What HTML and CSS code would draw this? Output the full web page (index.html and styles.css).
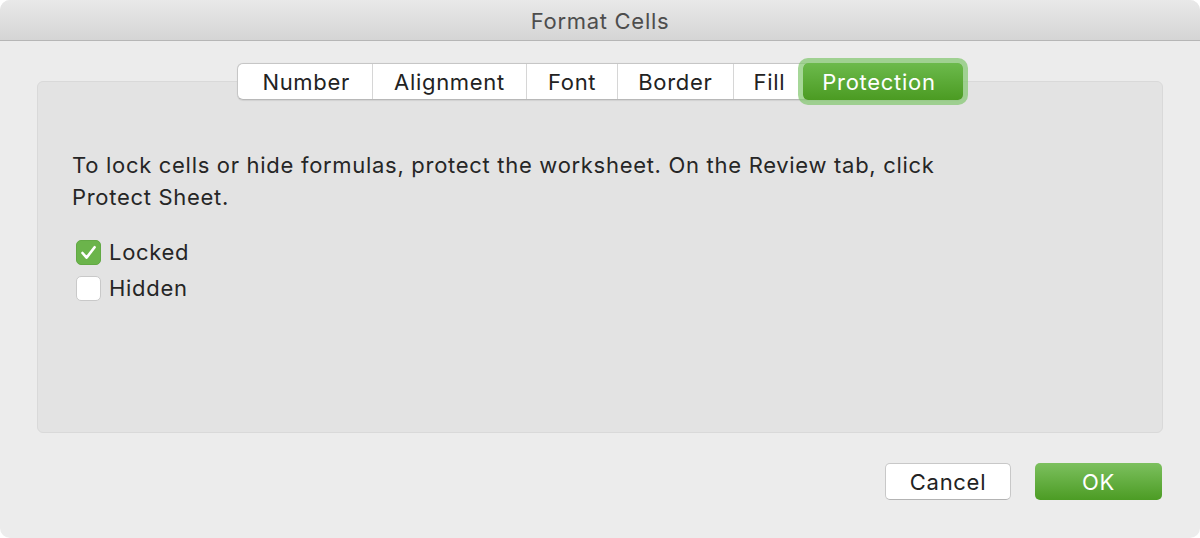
FILE: index.html
```html
<!DOCTYPE html>
<html lang="en">
<head>
<meta charset="utf-8">
<title>Format Cells</title>
<link rel="stylesheet" href="styles.css">
</head>
<body>
<div class="window">
  <div class="titlebar">Format Cells</div>
  <div class="content">
    <div class="tabs-wrap">
      <div class="tabs">
        <div class="tab">Number</div>
        <div class="tab">Alignment</div>
        <div class="tab">Font</div>
        <div class="tab">Border</div>
        <div class="tab">Fill</div>
        <div class="tab tab-active">Protection</div>
      </div>
    </div>
    <div class="group">
      <p class="info">To lock cells or hide formulas, protect the worksheet. On the Review tab, click Protect Sheet.</p>
      <div class="checks">
        <label class="check">
          <span class="box box-on">
            <svg viewBox="0 0 25 25" width="25" height="25"><path d="M6.5 13 L10.6 17.6 L18.6 7.2" fill="none" stroke="#fff" stroke-width="2.6" stroke-linecap="round" stroke-linejoin="round"/></svg>
          </span>
          <span class="check-label">Locked</span>
        </label>
        <label class="check">
          <span class="box"></span>
          <span class="check-label">Hidden</span>
        </label>
      </div>
    </div>
    <div class="buttons">
      <div class="btn btn-cancel">Cancel</div>
      <div class="btn btn-ok">OK</div>
    </div>
  </div>
</div>
</body>
</html>
```
FILE: styles.css
```css
html, body {
  margin: 0;
  padding: 0;
  background: #ffffff;
}
body {
  font-family: Inter, "Liberation Sans", sans-serif;
  font-size: 22px;
  letter-spacing: 0.7px;
  color: #262626;
}
.window {
  width: 1200px;
  height: 538px;
  background: #ececec;
  border-radius: 10px;
  overflow: hidden;
  display: flex;
  flex-direction: column;
}
.titlebar {
  height: 39px;
  border-bottom: 1px solid #b6b6b6;
  background: linear-gradient(#e9e9e9, #d5d5d5);
  color: #4d4d4d;
  display: flex;
  align-items: center;
  justify-content: center;
  line-height: 40px;
  padding-top: 1px;
  box-sizing: content-box;
}
.content {
  padding: 22px 37px 0 37px;
  display: flex;
  flex-direction: column;
}
.tabs-wrap {
  display: flex;
  justify-content: center;
  margin-bottom: -19px;
  position: relative;
  z-index: 1;
}
.tabs {
  display: flex;
  height: 37px;
  background: #ffffff;
  border: 1px solid #c6c6c6;
  border-bottom-color: #b8b8b8;
  border-radius: 6px;
  box-sizing: border-box;
  box-shadow: 0 0.5px 1px rgba(0,0,0,0.08);
}
.tab {
  padding: 0 21px;
  display: flex;
  align-items: center;
  border-right: 1px solid #d6d6d6;
  color: #222;
}
.tab:first-child {
  padding: 0 22px 0 24px;
}
.tab:nth-child(4) {
  padding: 0 20px;
}
.tab:nth-last-child(2) {
  border-right: none;
  padding: 0 18px 0 20px;
}
.tab-active {
  margin: -1px -1px -1px 0;
  border-right: none;
  color: #ffffff;
  background: linear-gradient(#6cba4c, #4b9b22);
  border-radius: 5px;
  padding: 0 27px 0 19px;
  box-shadow: 0 0 0 5px rgba(128, 198, 108, 0.7);
}
.group {
  height: 352px;
  box-sizing: border-box;
  background: #e3e3e3;
  border: 1px solid #d9d9d9;
  border-radius: 6px;
  padding: 67px 34px 0 34px;
}
.info {
  margin: 0;
  line-height: 32px;
  width: 890px;
}
.checks {
  margin-top: 21px;
  display: flex;
  flex-direction: column;
  padding-left: 4px;
}
.check {
  display: flex;
  align-items: center;
  height: 36px;
  gap: 8px;
}
.box {
  width: 25px;
  height: 25px;
  box-sizing: border-box;
  border-radius: 5px;
  background: #ffffff;
  border: 1px solid #c9c9c9;
  display: flex;
}
.box-on {
  background: #6bb44b;
  border-color: #62a944;
}
.box-on svg {
  margin: -1px;
}
.buttons {
  display: flex;
  justify-content: flex-end;
  gap: 24px;
  margin-top: 30px;
  padding-right: 1px;
}
.btn {
  height: 37px;
  box-sizing: border-box;
  width: 126px;
  border-radius: 5px;
  display: flex;
  align-items: center;
  justify-content: center;
}
.btn-cancel {
  background: #ffffff;
  border: 1px solid #c8c8c8;
  border-bottom-color: #b3b3b3;
  color: #222;
}
.btn-ok {
  width: 127px;
  color: #ffffff;
  background: linear-gradient(#7cc05e, #4c9c24);
}
```
